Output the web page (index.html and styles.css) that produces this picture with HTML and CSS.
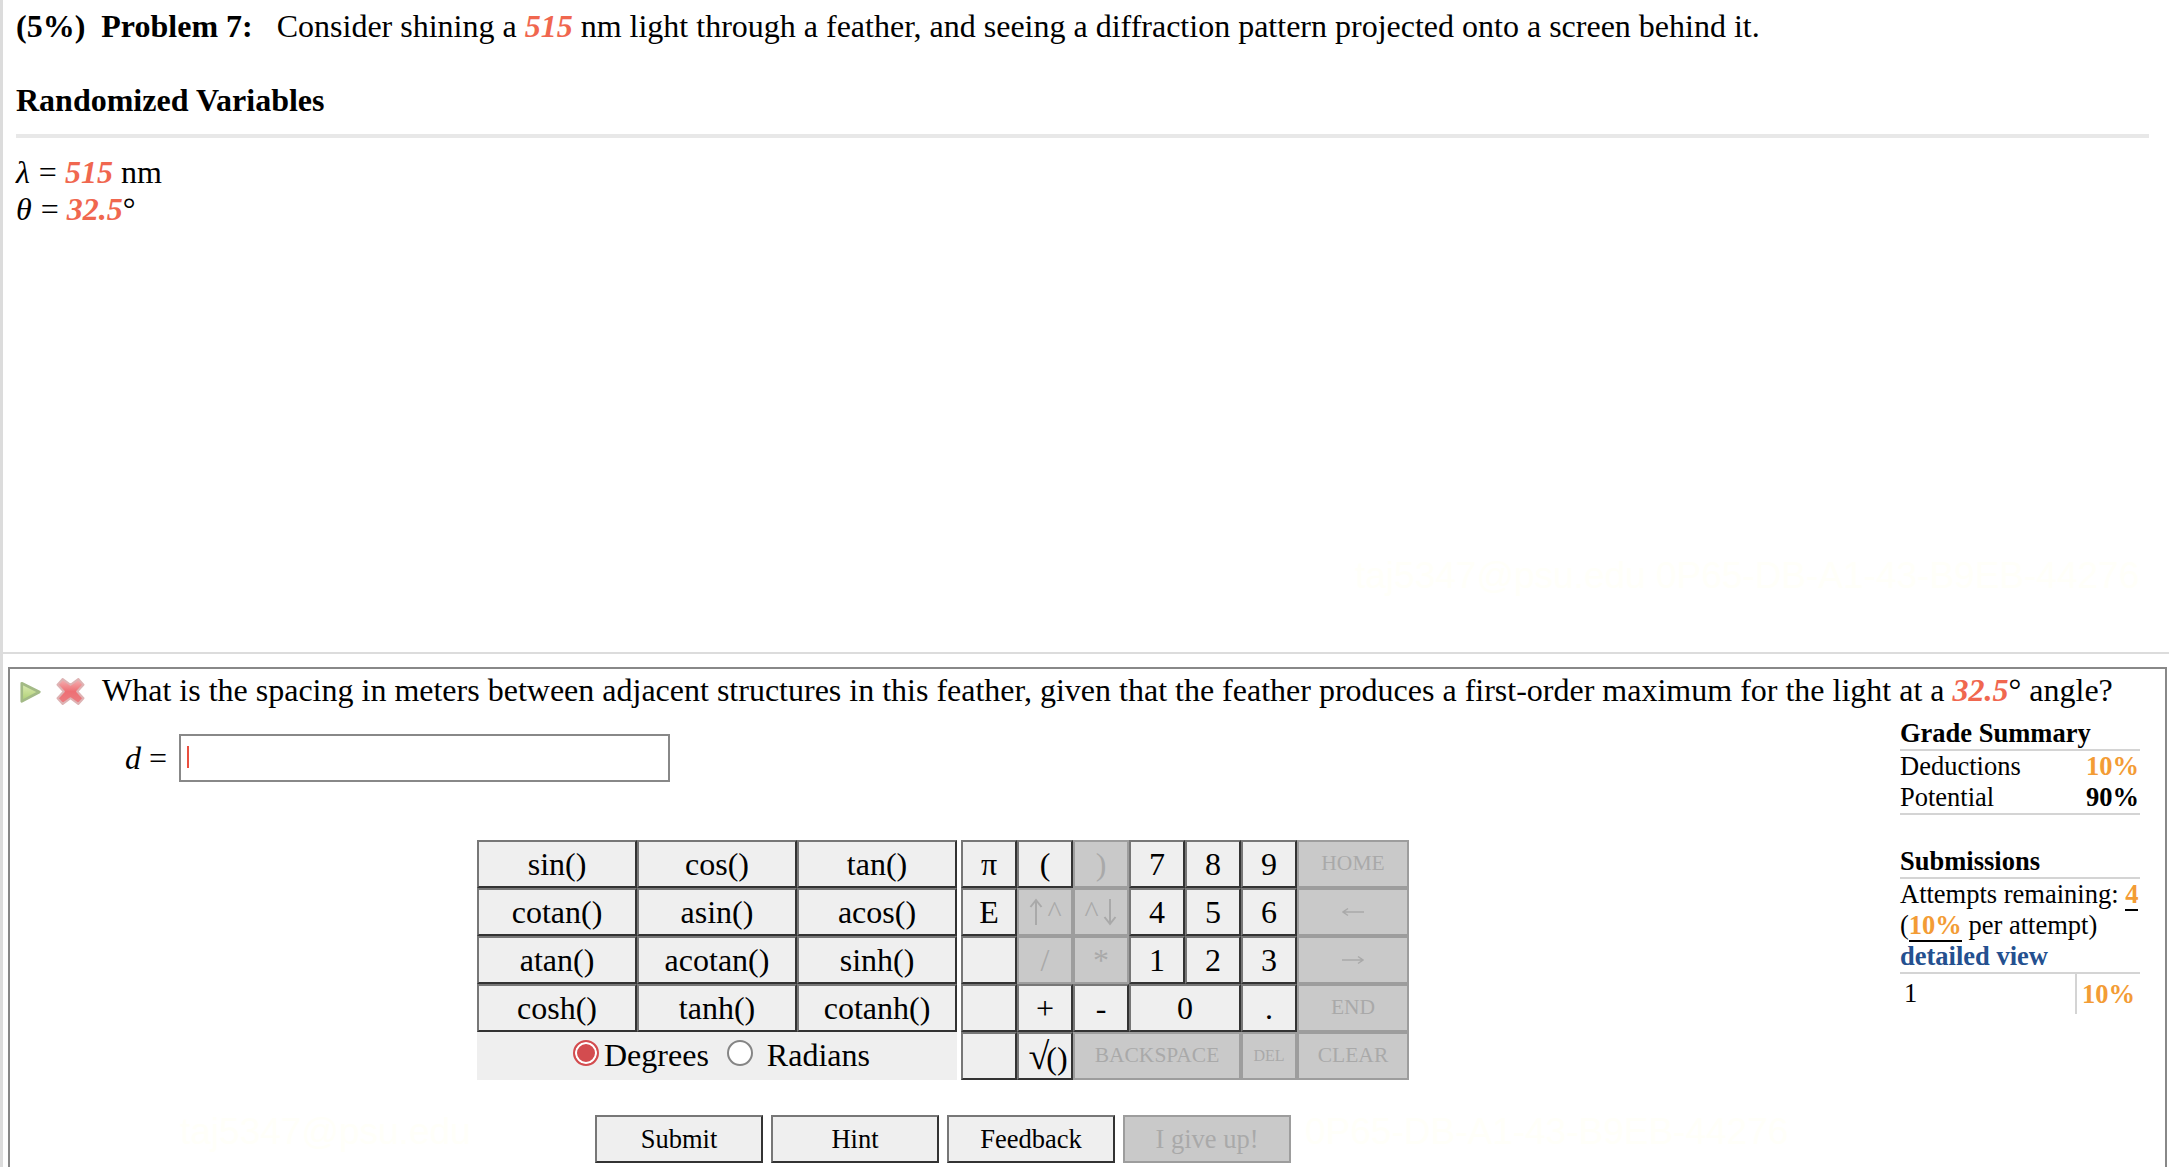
FILE: index.html
```html
<!DOCTYPE html>
<html lang="en">
<head>
<meta charset="utf-8">
<title>Problem 7</title>
<link rel="stylesheet" href="styles.css">
</head>
<body>
<div class="page">
  <span class="mark mark-a">taj5347@psu.edu 0P65-DB-A1-43-B9EB-44276</span>
  <span class="mark mark-b">taj5347@psu.edu</span>
  <span class="mark mark-c">0P65-DB-A1-43-B9EB-44276</span>
  <section class="intro">
    <p class="statement"><b class="weight">(5%)</b><b class="pnum">Problem 7:</b><span class="lead">Consider shining a <i class="var">515</i> nm light through a feather, and seeing a diffraction pattern projected onto a screen behind it.</span></p>
    <h2 class="heading">Randomized Variables</h2>
    <hr class="rule">
    <div class="vars">
      <div><i class="sym">λ</i> = <i class="var">515</i> nm</div>
      <div><i class="sym">θ</i> = <i class="var">32.5</i>°</div>
    </div>
  </section>
  <section class="question">
    <div class="qline">
      <svg class="ico-play" viewBox="0 0 20 20" aria-hidden="true"><defs><linearGradient id="pg" x1="0" y1="0" x2="0" y2="1"><stop offset="0" stop-color="#dcebb8"/><stop offset="0.5" stop-color="#c6de93"/><stop offset="1" stop-color="#a9cc72"/></linearGradient></defs><path d="M2.5 2 L18.5 10 L2.5 18.5 Z" fill="url(#pg)" stroke="#a3ba86" stroke-width="2.4" stroke-linejoin="round"/></svg>
      <svg class="ico-x" viewBox="0 0 28 28" aria-hidden="true"><defs><linearGradient id="xg" x1="0" y1="0" x2="0" y2="1"><stop offset="0" stop-color="#f4b3b4"/><stop offset="0.5" stop-color="#ee6f74"/><stop offset="1" stop-color="#ea7f83"/></linearGradient></defs><path d="M6.5 2 L14 7.5 L21.5 2 L26.5 7.5 L20.5 14 L26.5 20.5 L21.5 26 L14 20.5 L6.5 26 L1.5 20.5 L7.5 14 L1.5 7.5 Z" fill="url(#xg)" stroke="#deb3b4" stroke-width="2" stroke-linejoin="round"/></svg>
      <span class="qtext">What is the spacing in meters between adjacent structures in this feather, given that the feather produces a first-order maximum for the light at a <i class="var">32.5</i>° angle?</span>
    </div>
    <div class="qbody">
      <div class="work">
        <div class="answer">
          <span class="label"><i>d</i> =</span>
          <div class="field"><span class="caret"></span></div>
        </div>
        <div class="pad">
          <button class="key">sin()</button><button class="key">cos()</button><button class="key">tan()</button><span class="gap"></span><button class="key">π</button><button class="key">(</button><button class="key off">)</button><button class="key">7</button><button class="key">8</button><button class="key">9</button><button class="key off small">HOME</button>
          <button class="key">cotan()</button><button class="key">asin()</button><button class="key">acos()</button><span class="gap"></span><button class="key">E</button>
          <button class="key off" aria-label="up"><span class="arrowset"><svg class="arr-v" viewBox="0 0 16 28" aria-hidden="true"><path d="M8 27 V2 M2.5 9 L8 2 L13.5 9" /></svg><span>^</span></span></button>
          <button class="key off" aria-label="down"><span class="arrowset"><span>^</span><svg class="arr-v" viewBox="0 0 16 28" aria-hidden="true"><path d="M8 1 V26 M2.5 19 L8 26 L13.5 19" /></svg></span></button>
          <button class="key">4</button><button class="key">5</button><button class="key">6</button>
          <button class="key off" aria-label="left"><svg class="arr-h" viewBox="0 0 22 10" aria-hidden="true"><path d="M22 5 H1 M6 1.5 L1 5 L6 8.5" /></svg></button>
          <button class="key">atan()</button><button class="key">acotan()</button><button class="key">sinh()</button><span class="gap"></span><button class="key"></button><button class="key off">/</button><button class="key off">*</button><button class="key">1</button><button class="key">2</button><button class="key">3</button>
          <button class="key off" aria-label="right"><svg class="arr-h" viewBox="0 0 22 10" aria-hidden="true"><path d="M0 5 H21 M16 1.5 L21 5 L16 8.5" /></svg></button>
          <button class="key">cosh()</button><button class="key">tanh()</button><button class="key">cotanh()</button><span class="gap"></span><button class="key"></button><button class="key">+</button><button class="key">-</button><button class="key wide">0</button><button class="key">.</button><button class="key off small">END</button>
          <div class="units"><span class="radio on"></span><span class="unit-a">Degrees</span><span class="radio"></span><span class="unit-b">Radians</span></div><span class="gap"></span><button class="key"></button><button class="key sqrt"><span class="root">√</span>()</button><button class="key off small wider">BACKSPACE</button><button class="key off tiny">DEL</button><button class="key off small">CLEAR</button>
        </div>
        <div class="actions">
          <button class="act">Submit</button><button class="act">Hint</button><button class="act">Feedback</button><button class="act off">I give up!</button>
        </div>
      </div>
      <aside class="summary">
        <div class="s-title">Grade Summary</div>
        <div class="s-row"><span>Deductions</span><b class="amber">10%</b></div>
        <div class="s-row s-last"><span>Potential</span><b>90%</b></div>
        <div class="s-title s-second">Submissions</div>
        <div class="s-text">Attempts remaining: <b class="amber under">4</b></div>
        <div class="s-text">(<b class="amber under">10%</b> per attempt)</div>
        <div class="s-text s-last"><a class="link" href="#">detailed view</a></div>
        <div class="s-history"><span class="h-num">1</span><b class="amber h-val">10%</b></div>
      </aside>
    </div>
  </section>
</div>
</body>
</html>
```
FILE: styles.css
```css
* { box-sizing: border-box; }
html, body { margin: 0; height: 100%; overflow: hidden; background: #fff; }
body { font-family: "Liberation Serif", "Times New Roman", serif; font-size: 32px; line-height: 36px; color: #000; }
.page { position: relative; width: 2169px; height: 1167px; overflow: hidden; border-left: 3px solid #dcdcdc; }
.mark { position: absolute; font-family: "Liberation Sans", Arial, sans-serif; font-size: 37px; line-height: 36px; color: #fffff9; white-space: nowrap; pointer-events: none; }
.mark-a { left: 1352px; top: 558px; }
.mark-b { left: 177px; top: 1114px; }
.mark-c { left: 1302px; top: 1114px; }
.intro { position: relative; height: 652px; padding: 8px 13px 0 13px; }
.statement { margin: 0; height: 36px; white-space: nowrap; }
.pnum { margin-left: 16px; }
.lead { margin-left: 24px; }
.var { color: #f0674f; font-weight: bold; }
.heading { margin: 38px 0 0; font-size: 32px; line-height: 36px; font-weight: bold; }
.rule { margin: 16px 0 0; height: 4px; border: 0; background: #e8e8e8; width: 2133px; }
.vars { margin-top: 16px; line-height: 37px; }
.sym { margin-right: 1px; }
.question { position: relative; border-top: 2px solid #dcdcdc; padding: 13px 2px 0 5px; height: 515px; }
.qline { display: flex; align-items: center; height: 40px; border: 2px solid #888; border-bottom: 0; padding-top: 4px; white-space: nowrap; }
.ico-play { width: 22px; height: 22px; margin-left: 9px; margin-top: 4px; flex: none; filter: blur(0.4px); }
.ico-x { width: 29px; height: 29px; margin-left: 15px; margin-top: 2px; flex: none; filter: blur(0.4px); }
.qtext { margin-left: 17px; }
.qbody { display: flex; justify-content: space-between; border: 2px solid #888; border-top: 0; border-bottom: 0; height: 473px; }
.work { width: 1800px; }
.answer { display: flex; align-items: center; margin: 27px 0 0 115px; height: 48px; }
.label { width: 54px; flex: none; }
.field { width: 491px; height: 48px; border: 2px solid #888; padding: 10px 0 0 6px; }
.caret { display: block; width: 2px; height: 22px; background: #ea4f3f; }
.pad { display: grid; grid-template-columns: repeat(3, 160px) 4px repeat(6, 56px) 112px; grid-auto-rows: 48px; margin: 58px 0 0 467px; width: 932px; }
.key { margin: 0; padding: 0; font: inherit; font-size: 32px; line-height: 1; color: #000; background: #efefef; border: 2px solid; border-color: #777 #333 #333 #777; border-radius: 0; }
.key.off { background: #c9c9c9; color: #a9a9a9; border-color: #9d9d9d; }
.small { font-size: 21.5px; }
.tiny { font-size: 16px; }
.wide { grid-column: span 2; }
.wider { grid-column: span 3; }
.arrowset { display: flex; align-items: flex-start; justify-content: center; gap: 3px; font-size: 30px; line-height: 32px; height: 32px; }
.arr-v { width: 16px; height: 28px; fill: none; stroke: #a9a9a9; stroke-width: 2; margin-top: 2px; }
.arr-h { display: block; width: 22px; height: 10px; margin: 0 auto; fill: none; stroke: #a9a9a9; stroke-width: 1.4; }
.sqrt { padding-left: 6px; white-space: nowrap; }
.root { font-size: 38px; margin-right: -3px; }
.units { grid-column: span 3; display: flex; align-items: center; background: #efefef; padding-left: 96px; padding-bottom: 2px; font-size: 32px; }
.radio { flex: none; width: 26px; height: 26px; margin-top: -5px; border-radius: 50%; border: 2px solid #858585; background: #fff; }
.radio.on { border-color: #d34c4f; background: #d34c4f; box-shadow: inset 0 0 0 2px #fff; }
.unit-a { margin: 0 18px 0 5px; }
.unit-b { margin-left: 14px; }
.actions { display: flex; gap: 8px; margin: 35px 0 0 585px; }
.act { width: 168px; height: 48px; padding: 0; font: inherit; font-size: 26.5px; line-height: 1; background: #efefef; color: #000; border: 2px solid; border-color: #777 #333 #333 #777; border-radius: 0; }
.act.off { background: #c9c9c9; color: #a9a9a9; border-color: #9d9d9d; }
.summary { width: 240px; margin: 11px 25px 0 0; font-size: 26.5px; line-height: 31px; }
.s-title { font-weight: bold; border-bottom: 2px solid #d4d4d4; height: 33px; }
.s-second { margin-top: 31px; }
.s-row { display: flex; justify-content: space-between; padding-right: 1px; }
.s-last { height: 33px; border-bottom: 2px solid #d4d4d4; }
.s-text { white-space: nowrap; }
.amber { color: #f39c35; }
.under { border-bottom: 2px solid #000; }
.link { color: #24508f; font-weight: bold; text-decoration: none; }
.s-history { display: flex; height: 40px; align-items: center; }
.h-num { width: 177px; padding-left: 4px; border-right: 2px solid #d4d4d4; height: 40px; line-height: 38px; }
.h-val { margin-left: 5px; }
```
